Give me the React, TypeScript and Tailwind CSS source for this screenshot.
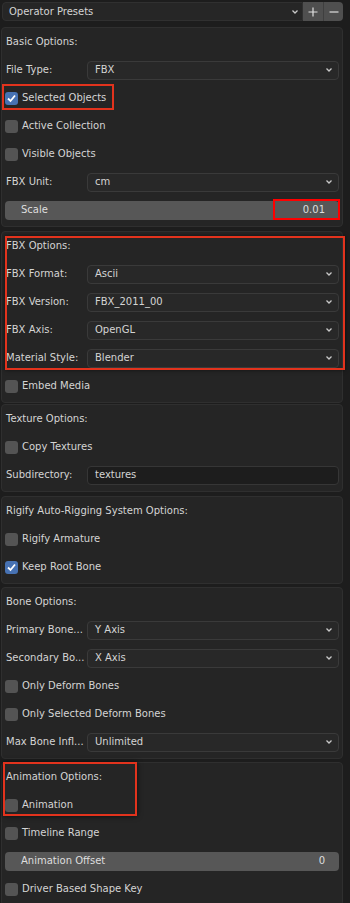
import React from "react";

function Chevron() {
  return (
    <svg width="8" height="6" viewBox="0 0 8 6" className="shrink-0">
      <polyline points="1.5,1.5 4,4 6.5,1.5" fill="none" stroke="#c8c8c8" strokeWidth="1.3" />
    </svg>
  );
}

function Check({ checked }: { checked?: boolean }) {
  return (
    <div
      className={`w-[13px] h-[13px] rounded-[3px] flex items-center justify-center shrink-0 ${
        checked ? "bg-[#4772b3]" : "bg-[#545454]"
      }`}
    >
      {checked && (
        <svg width="11" height="11" viewBox="0 0 11 11">
          <polyline points="2,5.5 4.5,8 9,2.5" fill="none" stroke="#ffffff" strokeWidth="1.8" />
        </svg>
      )}
    </div>
  );
}

function Heading({ text }: { text: string }) {
  return <div className="h-[28px] flex items-center pl-[4px] text-[#d4d4d4]">{text}</div>;
}

function CheckRow({ label, checked }: { label: string; checked?: boolean }) {
  return (
    <div className="h-[28px] flex items-center pl-[3px] gap-[4px] text-[#d4d4d4]">
      <Check checked={checked} />
      <span>{label}</span>
    </div>
  );
}

function SelectRow({ label, value }: { label: string; value: string }) {
  return (
    <div className="h-[28px] flex items-center pl-[4px] pr-[3px] text-[#d4d4d4]">
      <div className="w-[81px] shrink-0 whitespace-nowrap overflow-hidden">{label}</div>
      <div className="flex-1 h-[19px] rounded-[4px] border border-[#3a3a3a] bg-[#282828] flex items-center pl-[7px] pr-[5px] justify-between">
        <span>{value}</span>
        <Chevron />
      </div>
    </div>
  );
}

function TextRow({ label, value }: { label: string; value: string }) {
  return (
    <div className="h-[28px] flex items-center pl-[4px] pr-[3px] text-[#d4d4d4]">
      <div className="w-[81px] shrink-0">{label}</div>
      <div className="flex-1 h-[19px] rounded-[4px] border border-[#363636] bg-[#1d1d1d] flex items-center pl-[7px]">
        {value}
      </div>
    </div>
  );
}

function NumberRow({ label, value }: { label: string; value: string }) {
  return (
    <div className="h-[28px] flex items-center px-[3px] text-[#dedede]">
      <div className="flex-1 h-[19px] rounded-[4px] bg-[#575757] flex items-center justify-between pl-[16px] pr-[14px]">
        <span>{label}</span>
        <span>{value}</span>
      </div>
    </div>
  );
}

function Panel({ children, className = "" }: { children: React.ReactNode; className?: string }) {
  return (
    <div className={`w-[342px] rounded-[4px] border border-[#2f2f2f] bg-[#252525] pb-[2px] ${className}`}>
      {children}
    </div>
  );
}

export default function App() {
  return (
    <div className="relative w-[350px] h-[903px] overflow-hidden bg-[#1d1d1d] font-['DejaVu_Sans',sans-serif] text-[10px] leading-none">
      {/* presets bar */}
      <div className="flex pt-[2px] pl-[2px] pr-[7px] h-[21px]">
        <div className="w-[301px] h-[19px] rounded-l-[4px] border border-[#303030] bg-[#262626] flex items-center justify-between pl-[6px] pr-[3px] text-[#d4d4d4]">
          <span>Operator Presets</span>
          <Chevron />
        </div>
        <div className="w-[20px] h-[19px] bg-[#4f4f4f] flex items-center justify-center">
          <svg width="10" height="10" viewBox="0 0 10 10">
            <path d="M5 0.5V9.5M0.5 5H9.5" stroke="#e0e0e0" strokeWidth="1.2" />
          </svg>
        </div>
        <div className="w-[20px] h-[19px] bg-[#4f4f4f] rounded-r-[4px] border-l border-[#3f3f3f] flex items-center justify-center">
          <svg width="10" height="10" viewBox="0 0 10 10">
            <path d="M0.5 5H9.5" stroke="#e0e0e0" strokeWidth="1.2" />
          </svg>
        </div>
      </div>

      <div className="pl-[1px] pt-[6px]">
        <Panel>
          <Heading text="Basic Options:" />
          <SelectRow label="File Type:" value="FBX" />
          <CheckRow label="Selected Objects" checked />
          <CheckRow label="Active Collection" />
          <CheckRow label="Visible Objects" />
          <SelectRow label="FBX Unit:" value="cm" />
          <NumberRow label="Scale" value="0.01" />
        </Panel>

        <Panel className="mt-[4px]">
          <Heading text="FBX Options:" />
          <SelectRow label="FBX Format:" value="Ascii" />
          <SelectRow label="FBX Version:" value="FBX_2011_00" />
          <SelectRow label="FBX Axis:" value="OpenGL" />
          <SelectRow label="Material Style:" value="Blender" />
          <CheckRow label="Embed Media" />
        </Panel>

        <Panel className="mt-[1px]">
          <Heading text="Texture Options:" />
          <CheckRow label="Copy Textures" />
          <TextRow label="Subdirectory:" value="textures" />
        </Panel>

        <Panel className="mt-[4px]">
          <Heading text="Rigify Auto-Rigging System Options:" />
          <CheckRow label="Rigify Armature" />
          <CheckRow label="Keep Root Bone" checked />
        </Panel>

        <Panel className="mt-[3px]">
          <Heading text="Bone Options:" />
          <SelectRow label="Primary Bone..." value="Y Axis" />
          <SelectRow label="Secondary Bo..." value="X Axis" />
          <CheckRow label="Only Deform Bones" />
          <CheckRow label="Only Selected Deform Bones" />
          <SelectRow label="Max Bone Infl..." value="Unlimited" />
        </Panel>

        <Panel className="mt-[3px]">
          <Heading text="Animation Options:" />
          <CheckRow label="Animation" />
          <CheckRow label="Timeline Range" />
          <NumberRow label="Animation Offset" value="0" />
          <CheckRow label="Driver Based Shape Key" />
        </Panel>
      </div>

      {/* annotation boxes */}
      <div className="absolute left-[2px] top-[84px] w-[112px] h-[26px] border-2 border-[#e2331d]" />
      <div className="absolute left-[273px] top-[199px] w-[67px] h-[21px] border-2 border-[#ff0000]" />
      <div className="absolute left-[5px] top-[236px] w-[340px] h-[134px] border-2 border-[#e2331d] shadow-[0_0_4px_rgba(0,0,0,0.6)]" />
      <div className="absolute left-[3px] top-[762px] w-[134px] h-[54px] border-2 border-[#e2331d] shadow-[0_0_5px_rgba(0,0,0,0.7)]" />
    </div>
  );
}
